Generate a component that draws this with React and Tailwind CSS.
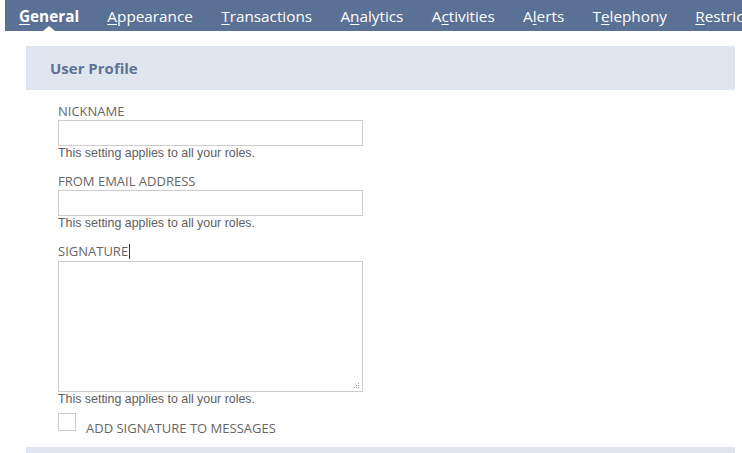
import React from 'react';

const tabs = [
  { pre: '', key: 'G', post: 'eneral', active: true },
  { pre: '', key: 'A', post: 'ppearance' },
  { pre: '', key: 'T', post: 'ransactions' },
  { pre: 'A', key: 'n', post: 'alytics' },
  { pre: 'A', key: 'c', post: 'tivities' },
  { pre: 'A', key: 'l', post: 'erts' },
  { pre: 'T', key: 'e', post: 'lephony' },
  { pre: '', key: 'R', post: 'estrictions' },
];

const openSans = "font-['Open_Sans',sans-serif]";
const arial = "font-['Liberation_Sans',Arial,sans-serif]";

const Help = () => (
  <div className={`${arial} text-[12.4px] leading-[14px] text-[#606060]`}>This setting applies to all your roles.</div>
);

const Field = ({ label, children }) => (
  <div className="mb-[13px]">
    <div className={`${openSans} text-[13px] leading-[16px] text-[#666] uppercase`}>{label}</div>
    <div className="mt-px">{children}</div>
    <Help />
  </div>
);

export default function App() {
  return (
    <div className="w-[742px] h-[453px] overflow-hidden bg-white">
      {/* Tab bar */}
      <div className="ml-[5px] h-[31px] bg-[#5b7095] flex items-center pl-[14px] gap-[28.3px] whitespace-nowrap overflow-hidden">
        {tabs.map((t, i) => (
          <div
            key={i}
            className={`relative h-full flex items-center pt-px ${openSans} text-[15.3px] text-white ${t.active ? 'font-bold' : ''}`}
          >
            <span>
              {t.pre}
              <span className="underline underline-offset-2">{t.key}</span>
              {t.post}
            </span>
            {t.active && (
              <span className="absolute bottom-0 left-1/2 -translate-x-1/2 w-0 h-0 border-l-[6px] border-r-[6px] border-b-[5px] border-l-transparent border-r-transparent border-b-white"></span>
            )}
          </div>
        ))}
      </div>

      {/* Section header */}
      <div className="mt-[15px] ml-[26px] w-[709px] h-[44px] bg-[#dfe6ef] flex items-center pl-[24px]">
        <span className={`${openSans} text-[15px] font-bold text-[#5f7393]`}>User Profile</span>
      </div>

      {/* Form */}
      <div className="pl-[58px] pt-[13px]">
        <Field label="Nickname">
          <input className="block w-[305px] h-[26px] border border-[#ccc] bg-white outline-none" />
        </Field>
        <Field label="From Email Address">
          <input className="block w-[305px] h-[26px] border border-[#ccc] bg-white outline-none" />
        </Field>
        <div>
          <div className={`${openSans} text-[13px] leading-[16px] text-[#666] uppercase flex items-center`}>
            Signature
            <span className="inline-block w-px h-[15px] bg-[#333] ml-px"></span>
          </div>
          <div className="mt-[2px] relative w-[305px] h-[131px]">
            <textarea className="block w-full h-full border border-[#ccc] bg-white outline-none resize-none"></textarea>
            <svg className="absolute right-[3px] bottom-[3px]" width="7" height="7" viewBox="0 0 7 7">
              <rect x="5" y="1" width="1" height="1" fill="#999" />
              <rect x="3" y="3" width="1" height="1" fill="#999" />
              <rect x="5" y="3" width="1" height="1" fill="#999" />
              <rect x="1" y="5" width="1" height="1" fill="#999" />
              <rect x="3" y="5" width="1" height="1" fill="#999" />
              <rect x="5" y="5" width="1" height="1" fill="#999" />
            </svg>
          </div>
          <Help />
        </div>
        <div className="mt-[7px] flex items-end gap-[10px]">
          <span className="block w-[18px] h-[18px] border border-[#ccc] bg-white"></span>
          <span className={`${openSans} text-[13px] leading-[16px] text-[#666] -mb-[5px]`}>ADD SIGNATURE TO MESSAGES</span>
        </div>
      </div>

      {/* Next section header (cut off) */}
      <div className="mt-[16px] ml-[26px] w-[709px] h-[20px] bg-[#dfe6ef]"></div>
    </div>
  );
}
